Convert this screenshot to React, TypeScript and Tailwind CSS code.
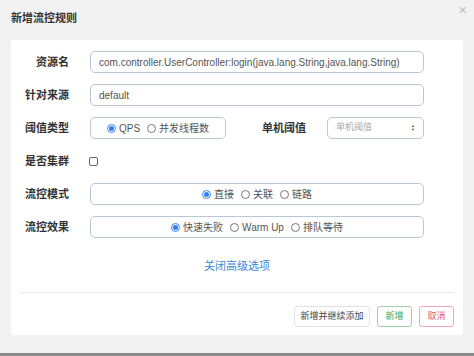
import type { ReactNode } from "react";

/* ── Bits ─────────────────────────────────────────────────── */

const FONT = "font-['Liberation_Sans','Noto_Sans_CJK_SC',sans-serif]";

function Radio({ on, children }: { on?: boolean; children: ReactNode }) {
    return (
        <span className="inline-flex items-center gap-[3px]">
            <span
                className={`w-[9px] h-[9px] rounded-full border flex items-center justify-center ${
                    on ? "border-[#3b82f6] bg-white" : "border-[#777] bg-white"
                }`}
            >
                {on && <span className="w-[5px] h-[5px] rounded-full bg-[#2f7ff0]" />}
            </span>
            <span>{children}</span>
        </span>
    );
}

function Label({ children, w = "w-[58px]" }: { children: ReactNode; w?: string }) {
    return (
        <div className={`${w} shrink-0 text-right text-[11px] font-bold text-[#333]`}>
            {children}
        </div>
    );
}

const BOX =
    "h-[22px] rounded-[5px] border border-[#b9c6d8] bg-white text-[10px] text-[#555] flex items-center";

/* ── Page ─────────────────────────────────────────────────── */

export default function App() {
    return (
        <div className={`w-[474px] h-[356px] bg-[#f2f2f2] flex flex-col ${FONT}`}>
            {/* ── Header ─────────────────────────────────── */}
            <div className="h-[40px] flex items-start justify-between pl-[11px] pr-[7px]">
                <h1 className="mt-[10px] text-[11px] leading-[16px] font-bold text-[#333]">新增流控规则</h1>
                <span className="mt-[2px] text-[15px] leading-none text-[#bbb]">×</span>
            </div>

            {/* ── Card ───────────────────────────────────── */}
            <div className="ml-[11px] w-[452px] h-[295px] bg-white rounded-[2px] flex flex-col">
                <div className="pt-[11px] flex flex-col gap-[11px]">
                    <div className="flex items-center gap-[21px]">
                        <Label>资源名</Label>
                        <div className={`${BOX} w-[334px] px-[8px]`}>
                            com.controller.UserController:login(java.lang.String,java.lang.String)
                        </div>
                    </div>
                    <div className="flex items-center gap-[21px]">
                        <Label>针对来源</Label>
                        <div className={`${BOX} w-[334px] px-[8px]`}>default</div>
                    </div>
                    <div className="flex items-center gap-[21px]">
                        <Label>阈值类型</Label>
                        <div className={`${BOX} w-[136px] justify-center gap-[7px]`}>
                            <Radio on>QPS</Radio>
                            <Radio>并发线程数</Radio>
                        </div>
                        <Label w="w-[59px]">单机阈值</Label>
                        <div className={`${BOX} w-[97px] px-[8px] justify-between`}>
                            <span className="text-[#aaa] text-[9px]">单机阈值</span>
                            <span className="flex flex-col items-center leading-none text-[#555]">
                                <span className="text-[4px]">▲</span>
                                <span className="text-[4px]">▼</span>
                            </span>
                        </div>
                    </div>
                    <div className="flex items-center gap-[21px] h-[22px]">
                        <Label>是否集群</Label>
                        <span className="w-[9px] h-[9px] ml-[-1px] border border-[#666] rounded-[2px]" />
                    </div>
                    <div className="flex items-center gap-[21px]">
                        <Label>流控模式</Label>
                        <div className={`${BOX} w-[334px] justify-center gap-[7px]`}>
                            <Radio on>直接</Radio>
                            <Radio>关联</Radio>
                            <Radio>链路</Radio>
                        </div>
                    </div>
                    <div className="flex items-center gap-[21px]">
                        <Label>流控效果</Label>
                        <div className={`${BOX} w-[334px] justify-center gap-[7px]`}>
                            <Radio on>快速失败</Radio>
                            <Radio>Warm Up</Radio>
                            <Radio>排队等待</Radio>
                        </div>
                    </div>
                </div>

                {/* ── Advanced toggle ───────────────────── */}
                <div className="mt-[20px] text-center text-[11px] leading-[16px] text-[#3d86d4]">
                    关闭高级选项
                </div>

                {/* ── Footer ────────────────────────────── */}
                <div className="mt-[18px] mx-[9px] border-t border-[#e8e8e8]" />
                <div className="mt-[13px] pr-[9px] flex justify-end gap-[7px] text-[9px]">
                    <button className="h-[21px] w-[76px] rounded-[3px] border border-[#e2e2e2] text-[#444]">
                        新增并继续添加
                    </button>
                    <button className="h-[21px] w-[35px] rounded-[3px] border border-[#9bd3a4] text-[#3aa655]">
                        新增
                    </button>
                    <button className="h-[21px] w-[35px] rounded-[3px] border border-[#f0a8b4] text-[#e05a72]">
                        取消
                    </button>
                </div>
            </div>

            <div className="mt-auto h-[3px] bg-[#8a8a8a]" />
        </div>
    );
}
